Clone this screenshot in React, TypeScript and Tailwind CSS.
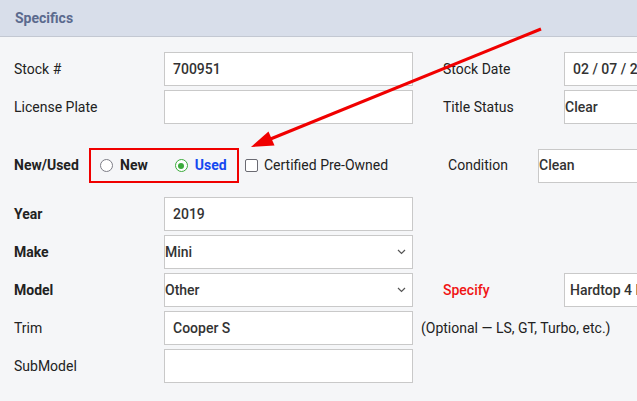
import { ReactNode } from "react";

const font = { fontFamily: "Roboto, 'Liberation Sans', sans-serif" };

function Label({ children, bold }: { children: ReactNode; bold?: boolean }) {
  return (
    <div
      className={`w-[150px] shrink-0 text-[14px] text-[#222] ${bold ? "font-bold" : ""}`}
    >
      {children}
    </div>
  );
}

function TextBox({ value, w = "w-[249px]", pad = "px-2" }: { value?: string; w?: string; pad?: string }) {
  return (
    <div
      className={`${w} ${pad} h-[34px] shrink-0 border border-[#c9c9c9] bg-white flex items-center overflow-hidden whitespace-nowrap text-[14px] font-medium text-[#333]`}
    >
      {value}
    </div>
  );
}

function SelectBox({ value, w = "w-[249px]", arrow = true }: { value: string; w?: string; arrow?: boolean }) {
  return (
    <div
      className={`${w} h-[34px] shrink-0 border border-[#c9c9c9] bg-white flex items-center justify-between pr-[6px] text-[14px] font-medium text-[#333]`}
    >
      <span>{value}</span>
      {arrow && (
        <svg width="9" height="6" viewBox="0 0 9 6" className="text-[#555]">
          <path d="M1 1 L4.5 4.5 L8 1" stroke="currentColor" strokeWidth="1.2" fill="none" />
        </svg>
      )}
    </div>
  );
}

export default function App() {
  return (
    <div className="relative w-[637px] h-[401px] overflow-hidden bg-[#f5f6f8]" style={font}>
      <div className="h-[37px] bg-[#d8deea] border-b border-[#c3c8d2] flex items-center px-[15px]">
        <span className="text-[14px] font-bold text-[#5b6a8e]">Specifics</span>
      </div>

      <div className="pl-[14px] pt-[15px] flex flex-col">
        <div className="flex items-center h-[34px]">
          <Label>Stock #</Label>
          <TextBox value="700951" />
          <div className="w-[30px] shrink-0" />
          <div className="w-[121px] shrink-0 text-[14px] text-[#222]">Stock Date</div>
          <TextBox value="02 / 07 / 2019" w="w-[200px]" />
        </div>
        <div className="flex items-center h-[34px] mt-[4px]">
          <Label>License Plate</Label>
          <TextBox />
          <div className="w-[30px] shrink-0" />
          <div className="w-[121px] shrink-0 text-[14px] text-[#222]">Title Status</div>
          <SelectBox value="Clear" w="w-[200px]" arrow={false} />
        </div>

        <div className="flex items-center h-[35px] mt-[24px]">
          <div className="w-[75px] shrink-0 text-[14px] font-bold text-[#222]">New/Used</div>
          <div className="w-[150px] h-[35px] shrink-0 border-2 border-[#f00000] flex items-center pl-[9px]">
            <span className="w-[13px] h-[13px] rounded-full border-[1.5px] border-[#7d7d86] bg-white" />
            <span className="ml-[7px] text-[14px] font-bold text-[#222]">New</span>
            <span className="ml-[27px] w-[13px] h-[13px] rounded-full border-[1.5px] border-[#3bab3b] bg-white flex items-center justify-center">
              <span className="w-[6px] h-[6px] rounded-full bg-[#3bab3b]" />
            </span>
            <span className="ml-[7px] text-[14px] font-bold text-[#1549f0]">Used</span>
          </div>
          <span className="ml-[6px] w-[13px] h-[13px] shrink-0 rounded-[2px] border-[1.5px] border-[#6a6a72] bg-white" />
          <span className="ml-[6px] shrink-0 whitespace-nowrap text-[14px] text-[#222]">Certified Pre-Owned</span>
          <span className="ml-[60px] w-[90px] shrink-0 text-[14px] text-[#222]">Condition</span>
          <SelectBox value="Clean" w="w-[120px]" arrow={false} />
        </div>

        <div className="flex items-center h-[34px] mt-[14px]">
          <Label bold>Year</Label>
          <TextBox value="2019" />
        </div>
        <div className="flex items-center h-[34px] mt-[4px]">
          <Label bold>Make</Label>
          <SelectBox value="Mini" />
        </div>
        <div className="flex items-center h-[34px] mt-[4px]">
          <Label bold>Model</Label>
          <SelectBox value="Other" />
          <div className="w-[30px] shrink-0" />
          <div className="w-[121px] shrink-0 text-[14px] font-medium text-[#f01414]">Specify</div>
          <TextBox value="Hardtop 4 Door" w="w-[200px]" pad="px-[5px]" />
        </div>
        <div className="flex items-center h-[34px] mt-[4px]">
          <Label>Trim</Label>
          <TextBox value="Cooper S" />
          <span className="ml-[8px] text-[14px] text-[#222] whitespace-nowrap">
            (Optional — LS, GT, Turbo, etc.)
          </span>
        </div>
        <div className="flex items-center h-[34px] mt-[4px]">
          <Label>SubModel</Label>
          <TextBox />
        </div>
      </div>

      <svg className="absolute left-0 top-0 pointer-events-none" width="637" height="401">
        <line x1="541" y1="29" x2="268" y2="140" stroke="#f00000" strokeWidth="3" />
        <polygon points="251,147 274.5,145.5 268.5,131.5" fill="#f00000" />
      </svg>
    </div>
  );
}
